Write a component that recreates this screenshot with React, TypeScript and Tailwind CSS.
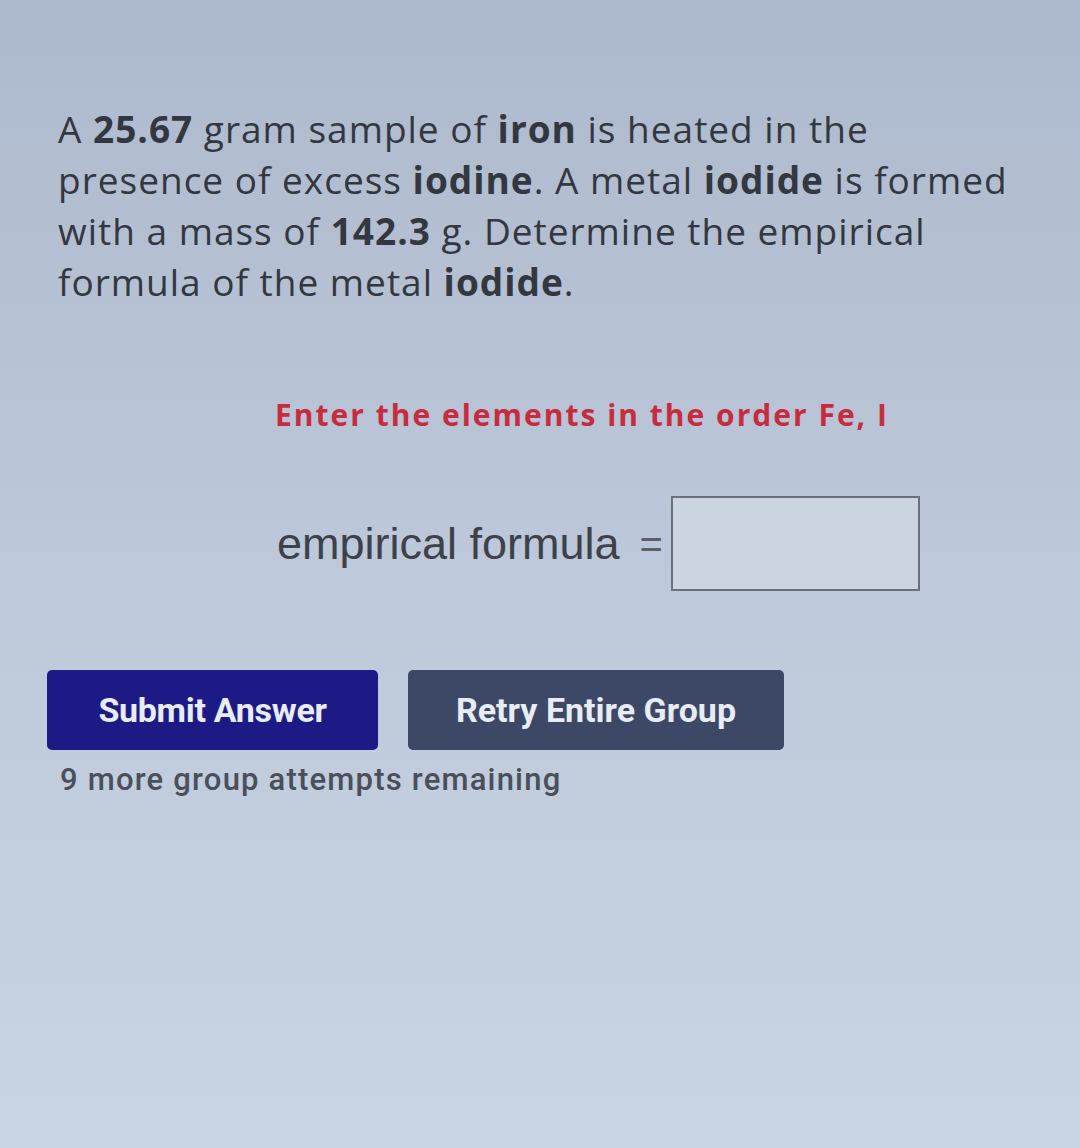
import React from 'react';

export default function App() {
  return (
    <div className="min-h-[1148px] w-[1080px] bg-gradient-to-b from-[#adb9cc] via-[#bdc8da] to-[#c9d5e2] pt-[103px] font-['Open_Sans',sans-serif] text-[#33373f]">
      <p className="ml-[58px] whitespace-nowrap text-[37px] leading-[51px] tracking-[1px]">
        A <b>25.67</b> gram sample of <b>iron</b> is heated in the
        <br />
        presence of excess <b>iodine</b>. A metal <b>iodide</b> is formed
        <br />
        with a mass of <b>142.3</b> g. Determine the empirical
        <br />
        formula of the metal <b>iodide</b>.
      </p>

      <div className="mt-[85px] ml-[275px] text-[30px] font-bold tracking-[2px] text-[#c72c3e]">
        Enter the elements in the order Fe, I
      </div>

      <div className="mt-[59px] ml-[277px] flex items-center font-['Liberation_Sans',sans-serif]">
        <span className="text-[45px] text-[#3d4149]">empirical formula</span>
        <span className="ml-[20px] text-[40px] text-[#5a5f68]">=</span>
        <div className="ml-[8px] h-[95px] w-[249px] border-2 border-[#6b7078] bg-[#cbd5e1]" />
      </div>

      <div className="mt-[79px] ml-[47px] flex gap-[30px] font-['Roboto',sans-serif]">
        <button className="h-[80px] w-[331px] rounded-[5px] bg-[#1d1a86] text-[34px] font-bold tracking-[-0.3px] text-[#e8ecf5]">
          Submit Answer
        </button>
        <button className="h-[80px] w-[376px] rounded-[5px] bg-[#3d4866] text-[34px] font-bold text-[#e8ecf5]">
          Retry Entire Group
        </button>
      </div>

      <div className="mt-[12px] ml-[60px] text-[31px] leading-[36px] font-medium tracking-[1.2px] text-[#4a4f5a] font-['Roboto',sans-serif]">
        9 more group attempts remaining
      </div>
    </div>
  );
}
